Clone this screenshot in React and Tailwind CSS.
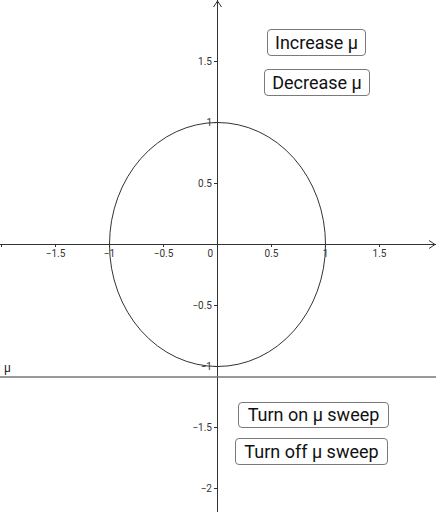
import React from "react";

const OX = 217;
const OY = 244;
const SX = 108;
const SY = 122;

const xTicks = [-2, -1.5, -1, -0.5, 0.5, 1, 1.5];
const yTicks = [1.5, 1, 0.5, -0.5, -1, -1.5, -2];

const fmt = (v) => (v < 0 ? "\u2212" + String(-v) : String(v));

function Graph() {
  return (
    <svg
      className="absolute inset-0"
      width="436"
      height="512"
      viewBox="0 0 436 512"
      style={{ fontFamily: "Roboto, 'Liberation Sans', sans-serif" }}
    >
      {/* x-axis */}
      <line x1="0" y1={OY + 0.5} x2="436" y2={OY + 0.5} stroke="#333" strokeWidth="1" />
      <polyline points={`429,${OY - 3.5} 435,${OY + 0.5} 429,${OY + 4.5}`} fill="none" stroke="#333" strokeWidth="1" />
      {/* y-axis */}
      <line x1={OX + 0.5} y1="0" x2={OX + 0.5} y2="512" stroke="#333" strokeWidth="1" />
      <polyline points={`${OX - 3.5},7 ${OX + 0.5},1 ${OX + 4.5},7`} fill="none" stroke="#333" strokeWidth="1" />

      {xTicks.map((v) => {
        const x = OX + v * SX;
        return (
          <g key={"x" + v}>
            <line x1={x + 0.5} y1={OY} x2={x + 0.5} y2={OY + 3} stroke="#333" strokeWidth="1" />
            {v > -2 && (
              <text x={x + 0.5} y={OY + 13} fontSize="10" fill="#333" textAnchor="middle">
                {fmt(v)}
              </text>
            )}
          </g>
        );
      })}
      <text x={OX - 4} y={OY + 13} fontSize="10" fill="#333" textAnchor="end">
        0
      </text>

      {yTicks.map((v) => {
        const y = OY - v * SY;
        return (
          <g key={"y" + v}>
            <line x1={OX - 3} y1={y + 0.5} x2={OX} y2={y + 0.5} stroke="#333" strokeWidth="1" />
            <text x={OX - 5} y={y + 4} fontSize="10" fill="#333" textAnchor="end">
              {fmt(v)}
            </text>
          </g>
        );
      })}

      {/* ellipse */}
      <ellipse cx={OX + 0.5} cy={OY + 0.5} rx={SX} ry={SY} fill="none" stroke="#333" strokeWidth="1" />

      {/* mu line */}
      <line x1="0" y1="377" x2="436" y2="377" stroke="#777" strokeWidth="1.5" />
      <text x="4" y="372" fontSize="12" fill="#222">
        μ
      </text>
    </svg>
  );
}

function Btn({ className, children }) {
  return (
    <div
      className={
        "absolute flex items-center justify-center bg-white border border-[#7a7a7a] rounded-[4px] text-[18px] leading-none text-[#111] font-['Roboto',_'Liberation_Sans',_sans-serif] " +
        className
      }
    >
      {children}
    </div>
  );
}

export default function App() {
  return (
    <div className="relative w-[436px] h-[512px] bg-white overflow-hidden">
      <Graph />
      <Btn className="left-[267px] top-[29px] w-[99px] h-[27px]">Increase μ</Btn>
      <Btn className="left-[264px] top-[69px] w-[106px] h-[27px]">Decrease μ</Btn>
      <Btn className="left-[238px] top-[402px] w-[151px] h-[26px]">Turn on μ sweep</Btn>
      <Btn className="left-[235px] top-[438px] w-[153px] h-[27px]">Turn off μ sweep</Btn>
    </div>
  );
}
